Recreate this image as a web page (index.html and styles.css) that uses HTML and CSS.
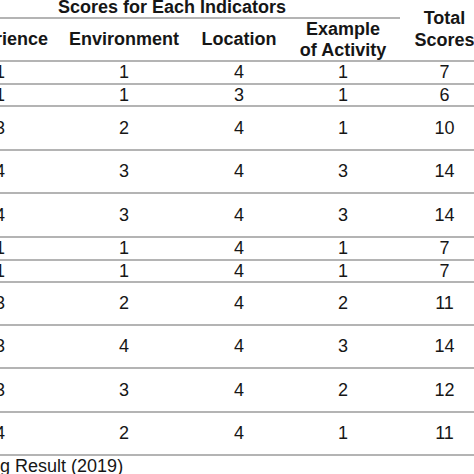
FILE: index.html
```html
<!DOCTYPE html>
<html>
<head>
<meta charset="utf-8">
<link rel="stylesheet" href="styles.css">
</head>
<body>
<div class="page">
  <div class="sheet">
    <table class="scores">
      <colgroup>
        <col class="c-name"><col class="c-exp"><col class="c-env"><col class="c-loc"><col class="c-ex"><col class="c-tot">
      </colgroup>
      <thead>
        <tr class="h1">
          <th rowspan="2" class="nm"></th>
          <th colspan="4" class="group">Scores for Each Indicators</th>
          <th rowspan="2" class="tot">Total<br>Scores</th>
        </tr>
        <tr class="h2">
          <th>Experience</th>
          <th>Environment</th>
          <th>Location</th>
          <th>Example<br>of Activity</th>
        </tr>
      </thead>
      <tbody>
        <tr class="r22"><td></td><td>1</td><td>1</td><td>4</td><td>1</td><td>7</td></tr>
        <tr class="r21"><td></td><td>1</td><td>1</td><td>3</td><td>1</td><td>6</td></tr>
        <tr class="r44"><td></td><td>3</td><td>2</td><td>4</td><td>1</td><td>10</td></tr>
        <tr class="r43"><td></td><td>4</td><td>3</td><td>4</td><td>3</td><td>14</td></tr>
        <tr class="r44"><td></td><td>4</td><td>3</td><td>4</td><td>3</td><td>14</td></tr>
        <tr class="r22"><td></td><td>1</td><td>1</td><td>4</td><td>1</td><td>7</td></tr>
        <tr class="r22"><td></td><td>1</td><td>1</td><td>4</td><td>1</td><td>7</td></tr>
        <tr class="r43"><td></td><td>3</td><td>2</td><td>4</td><td>2</td><td>11</td></tr>
        <tr class="r43"><td></td><td>3</td><td>4</td><td>4</td><td>3</td><td>14</td></tr>
        <tr class="r44"><td></td><td>3</td><td>3</td><td>4</td><td>2</td><td>12</td></tr>
        <tr class="r43"><td></td><td>4</td><td>2</td><td>4</td><td>1</td><td>11</td></tr>
      </tbody>
    </table>
    <p class="source">Source: Scoring Result (2019)</p>
  </div>
</div>
</body>
</html>
```

FILE: styles.css
```css
html, body {
  margin: 0;
  padding: 0;
  background: #ffffff;
}

.page {
  width: 474px;
  height: 474px;
  overflow: hidden;
}

.sheet {
  margin-left: -118px;
  margin-top: -3px;
  width: 607px;
  font-family: "Liberation Sans", Arial, Helvetica, sans-serif;
  font-size: 18px;
  color: #161616;
}

.scores {
  border-collapse: collapse;
  table-layout: fixed;
  width: 607px;
}

.c-name { width: 62px; }
.c-exp { width: 112px; }
.c-env { width: 136px; }
.c-loc { width: 94px; }
.c-ex { width: 114px; }
.c-tot { width: 89px; }

.scores th,
.scores td {
  padding: 0;
  text-align: center;
  vertical-align: middle;
  line-height: 20.5px;
}

.scores th {
  font-weight: bold;
}

.scores tr.h1 { height: 21px; }
.scores tr.h2 { height: 43px; }
.scores tr.r21 { height: 21px; }
.scores tr.r22 { height: 22px; }
.scores tr.r43 { height: 43px; }
.scores tr.r44 { height: 44px; }

.scores .group {
  border-bottom: 2px solid #b4b4b4;
  line-height: 19px;
}

.scores .tot {
  line-height: 22px;
}

.scores tr.h2 th,
.scores .tot,
.scores .nm,
.scores td {
  border-bottom: 2px solid #b4b4b4;
}

.source {
  margin: 0;
  text-align: left;
  line-height: 20.7px;
}
```
